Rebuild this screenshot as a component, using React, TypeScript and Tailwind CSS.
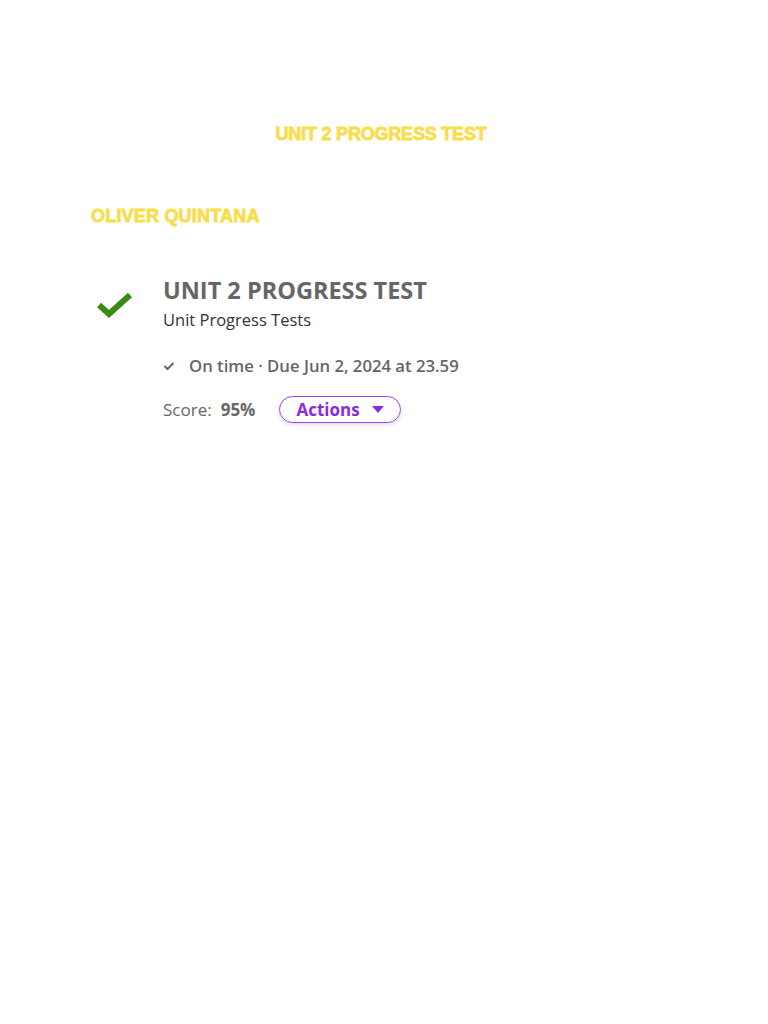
import React from "react";

export default function App() {
  return (
    <div className="w-[768px] h-[1024px] bg-white relative" style={{ fontFamily: "'Open Sans', 'Noto Sans', sans-serif" }}>
      <div className="pt-[122px] flex justify-center">
        <h1
          className="mr-[6px] text-[18px] font-bold tracking-[-0.2px] leading-[24px] text-[#f7d67c] [-webkit-text-stroke:0.8px_#f8e41c]"
          style={{ fontFamily: "'Liberation Sans', Arial, sans-serif" }}
        >
          UNIT 2 PROGRESS TEST
        </h1>
      </div>
      <div className="pl-[91px] pt-[58px]">
        <h2
          className="text-[18px] font-bold tracking-[0.2px] leading-[24px] text-[#f7d67c] [-webkit-text-stroke:0.8px_#f8e41c]"
          style={{ fontFamily: "'Liberation Sans', Arial, sans-serif" }}
        >
          OLIVER QUINTANA
        </h2>
      </div>
      <div className="flex pl-[96px] pt-[47px]">
        <div className="w-[67px] pt-[16px]">
          <svg width="38" height="28" viewBox="0 0 38 28">
            <path d="M3 14 L13 23 L34 4" fill="none" stroke="#3d8a12" strokeWidth="6" strokeLinejoin="miter" />
          </svg>
        </div>
        <div className="flex flex-col">
          <div className="text-[23.5px] font-bold text-[#666] leading-[30px]">UNIT 2 PROGRESS TEST</div>
          <div className="text-[16.5px] text-[#333] leading-[22px] mt-[4px]">Unit Progress Tests</div>
          <div className="flex items-center mt-[24px] text-[16.7px] font-semibold text-[#666] leading-[22px]">
            <svg width="12" height="10" viewBox="0 0 12 10" className="mr-[14px]">
              <path d="M1.5 5 L4.5 8 L10.5 2" fill="none" stroke="#666" strokeWidth="2" />
            </svg>
            <span>On time · Due Jun 2, 2024 at 23.59</span>
          </div>
          <div className="flex items-center mt-[19px] text-[17px] text-[#666] leading-[22px]">
            <span>Score:</span>
            <span className="ml-[9px] font-bold">95%</span>
            <button className="ml-[24px] flex items-center h-[27px] px-[16px] border-[1.5px] border-[#9b3dff] rounded-full text-[#8a2be2] font-bold text-[17px] shadow-[0_2px_4px_rgba(0,0,0,0.12)]">
              <span>Actions</span>
              <svg width="12" height="8" viewBox="0 0 12 8" className="ml-[12px]">
                <path d="M0 0 L12 0 L6 7 Z" fill="#8a2be2" />
              </svg>
            </button>
          </div>
        </div>
      </div>
    </div>
  );
}
